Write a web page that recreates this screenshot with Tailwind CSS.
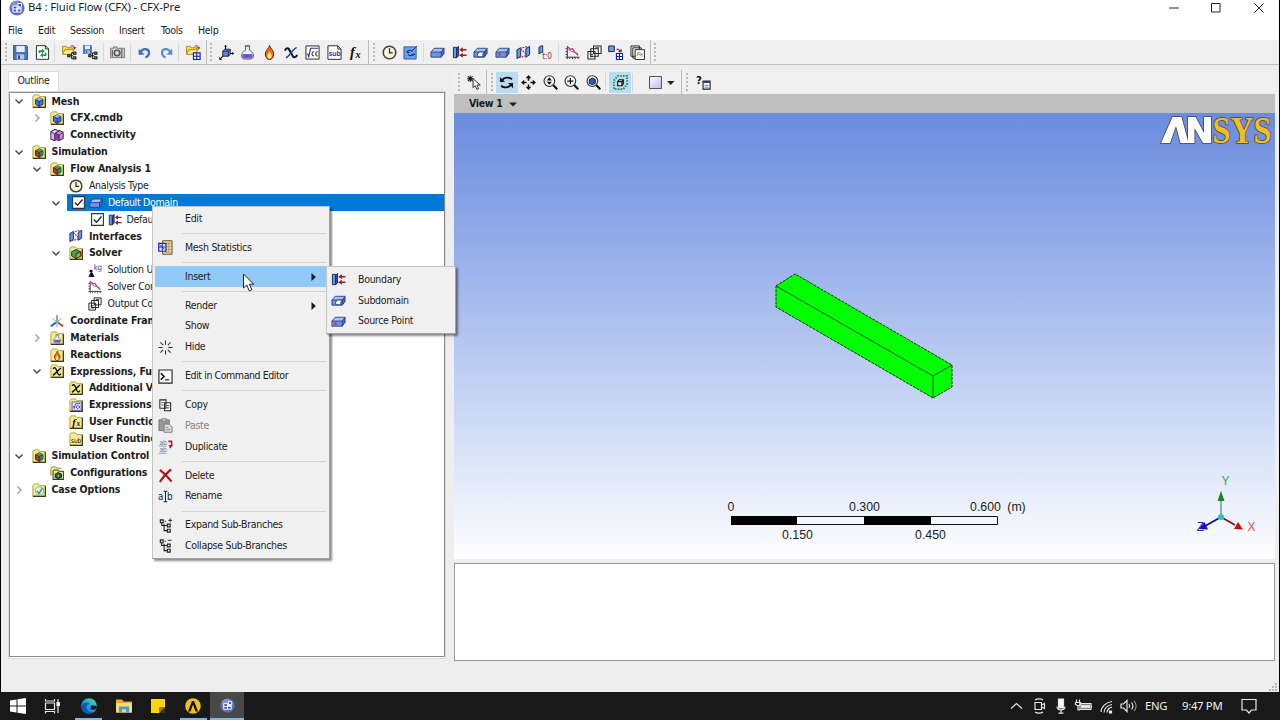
<!DOCTYPE html>
<html lang="en">
<head>
  <meta charset="UTF-8" />
  <meta name="viewport" content="width=device-width, initial-scale=1.0"/>
  <title>B4 : Fluid Flow (CFX) - CFX-Pre</title>
  <script src="https://cdn.jsdelivr.net/npm/@tailwindcss/browser@4"></script>
</head>
<body class="w-[1280px] h-[720px] overflow-hidden bg-black font-['DejaVu_Sans_Condensed','Noto_Sans',sans-serif] text-[10.5px] tracking-[-0.3px] text-[#1c1c1c]">

<!-- gradients have to stay rendered, the symbols don't -->
<svg class="absolute w-0 h-0">
  <linearGradient id="skyGrad" x1="0" y1="0" x2="1" y2="1"><stop offset="0" stop-color="#fff"/><stop offset="1" stop-color="#b4bce8"/></linearGradient>
  <linearGradient id="edgeGrad" x1="0" y1="1" x2="1" y2="0"><stop offset="0" stop-color="#0a5cc0"/><stop offset=".5" stop-color="#1fa0e0"/><stop offset="1" stop-color="#5fe07a"/></linearGradient>
</svg>

<!-- icon sprite, every symbol is 16x16 -->
<svg class="hidden">
  <symbol id="app" viewBox="0 0 16 16"><circle cx="8" cy="8" r="7.600" fill="#5a6fc0"/><circle cx="7" cy="6" r="5" fill="#8593d6"/><path d="M4 6h4v6H4zM8 8h4v4H8zM4 9h8M9 3.500h3.500V7H9z" fill="#4457ae" stroke="#fff" stroke-width="1"/></symbol>
  <symbol id="save" viewBox="0 0 16 16"><path d="M.5.5h14l1 1v14H.5z" fill="#4a74b8" stroke="#34548c"/><path d="M3.500 1h9v6.500h-9z" fill="#e8eef8"/><path d="M4 10h8v5.500H4z" fill="#b8c8e0"/><path d="M5.500 11h2v4h-2z" fill="#2c4c88"/></symbol>
  <symbol id="refresh" viewBox="0 0 16 16"><path d="M1.500.7h9.500l3.500 3.500v11.100h-13z" fill="#fff" stroke="#222"/><path d="M11 .7v3.500h3.500" fill="none" stroke="#222"/><path d="M4.700 8.500V6.500h3.500M11.300 8v3H8" fill="none" stroke="#18963a" stroke-width="1.700"/><path d="M7.500 3.800l3 2.700-3 2.500zM8.500 8.500v5l-3-2.500z" fill="#18963a"/></symbol>
  <symbol id="branches" viewBox="0 0 16 16"><path d="M7 11.500h5M10 8.500v6h2M10 8.500h2" fill="none" stroke="#111"/><path d="M6 10.200h2.500v2.500H6zM12 7.500h3v2.500h-3zM12 12.500h3V15h-3z" fill="#3aa050" stroke="#111" stroke-width=".9"/></symbol>
  <symbol id="openF" viewBox="0 0 16 16"><path d="M.6 9V1.500h4l1 1.500h6v2" fill="#f8e060" stroke="#a58518"/><path d="M.6 10L3 5h9.500L10 10z" fill="#fbe984" stroke="#a58518"/><path d="M9 1.500c2-1.500 4-.5 4.500 1.500" fill="none" stroke="#b02020"/><path d="M11.700 2.500h3.600L13.500 5z" fill="#b02020"/></symbol>
  <symbol id="openTree" viewBox="0 0 16 16"><use href="#openF"/><use href="#branches"/></symbol>
  <symbol id="saveTree" viewBox="0 0 16 16"><use href="#save" width="9.500" height="9.500"/><use href="#branches"/></symbol>
  <symbol id="openGrid" viewBox="0 0 16 16"><use href="#openF"/><path d="M8 8.500h7v7H8zM11.500 8.500v7M8 12h7" fill="#fff" stroke="#1520b0" stroke-width="1.300"/></symbol>
  <symbol id="camera" viewBox="0 0 16 16"><path d="M.6 3.500h3v-1.500h4v1.500h7.800v10H.6z" fill="#c9c9c9" stroke="#777"/><circle cx="7.500" cy="8.500" r="3.300" fill="#999" stroke="#333"/><circle cx="7.500" cy="8.500" r="1.500" fill="#eee"/><path d="M12.500 4v9.500M2.500 5.500v7" stroke="#555"/></symbol>
  <symbol id="undo" viewBox="0 0 16 16"><path d="M4 7.500C6 3 13 3.500 12.800 8.500 12.700 11 11 12.500 9 13.500" fill="none" stroke="#3c6cba" stroke-width="2.300"/><path d="M1.800 4v6.500h6.400z" fill="#3c6cba"/></symbol>
  <symbol id="redo" viewBox="0 0 16 16"><path d="M12 7.500C10 3 3 3.500 3.200 8.500 3.300 11 5 12.500 7 13.500" fill="none" stroke="#5c8cc8" stroke-width="2.300"/><path d="M14.200 4v6.500H7.800z" fill="#5c8cc8"/></symbol>
  <symbol id="box" viewBox="0 0 16 16"><path d="M1 7.500L4.500 3.500H15L12 7.500z" fill="#a5c0fa"/><path d="M1 7.500h11v5.500H1z" fill="#6a94ee"/><path d="M12 7.500l3-4V9l-3 4z" fill="#4468c0"/><path d="M1 7.500L4.500 3.500H15V9l-3 4H1zM1 7.500h11l3-4M12 7.500V13" fill="none" stroke="#22386e" stroke-width=".9"/></symbol>
  <symbol id="axesBox" viewBox="0 0 16 16"><path d="M7 0v5M11 9h5M5 11l-4 4" stroke="#111" stroke-width="1.200"/><path d="M5.500 2L7 0l1.500 2zM14 7.300L16 9l-2 1.700zM.3 12.500v3.200h3.200z" fill="#111"/><path d="M4 6.500L6 4.500h6v5.500l-2 2H4z" fill="#5f86dc" stroke="#16264f"/><path d="M4 6.500h6V12M10 6.500l2-2" fill="none" stroke="#16264f"/></symbol>
  <symbol id="flask" viewBox="0 0 16 16"><path d="M6 1h4v4.500c6 3 5 9.500 1.500 9.500h-7C1 15 0 8.500 6 5.500z" fill="#eef" stroke="#555"/><path d="M2.800 9.500h10.400c1 3-.2 5-2 5H4.800c-1.800 0-3-2-2-5z" fill="#6a5fd0"/><path d="M5 1h6M6 11.500h3" stroke="#555"/></symbol>
  <symbol id="flame" viewBox="0 0 16 16"><path d="M8 .5c.5 3 5 5 4.500 9.500C12.200 13 10.500 15.500 8 15.500S3.800 13 3.500 10C3.300 6 7.500 4 8 .5z" fill="#f06a10" stroke="#501808"/><path d="M8 6.500c.5 2 2.500 3 2.300 5.500-.2 1.500-1.200 2.500-2.300 2.500S5.700 13.500 5.700 12C5.500 9.500 7.700 8.500 8 6.500z" fill="#fff27a"/></symbol>
  <symbol id="chi" viewBox="0 0 16 16"><path d="M1 6c1-3 4-3.500 5 0l3 5c1 3 4 2.500 5-.5" fill="none" stroke="#10182a" stroke-width="2.200"/><path d="M13.500 3C10 3 5 13.500 2 13.500" fill="none" stroke="#23489a" stroke-width="1.700"/></symbol>
  <symbol id="root" viewBox="0 0 16 16"><path d="M1 1h14v14H1z" fill="#fff" stroke="#222"/><path d="M2.500 9l1.500 3.500L6 3.500h8" fill="none" stroke="#2a32a8" stroke-width="1.200"/><path d="M9.800 7.200c-3-.5-3 5 0 4.500M13.700 7.200c-3-.5-3 5 0 4.500" fill="none" stroke="#444" stroke-width="1.200"/></symbol>
  <symbol id="subDoc" viewBox="0 0 16 16"><path d="M1 .8h10.500L15 4.300v11H1z" fill="#fff" stroke="#222"/><path d="M11.500.8v3.500H15" fill="none" stroke="#222"/><text x="8" y="12.200" text-anchor="middle" font-size="7.500" font-weight="bold" letter-spacing="-.3" fill="#4a3fc8">sub</text></symbol>
  <symbol id="fx" viewBox="0 0 16 16"><text x="2" y="12.500" font-size="15.500" font-weight="bold" font-style="italic" font-family="Liberation Serif" fill="#111">f</text><text x="8" y="13.500" font-size="11" font-weight="bold" font-style="italic" font-family="Liberation Serif" fill="#111">x</text></symbol>
  <symbol id="clock" viewBox="0 0 16 16"><circle cx="8" cy="8" r="6.700" fill="#f7f7e4" stroke="#45452f" stroke-width="1.700"/><path d="M8 3.500V8.500h3.500" fill="none" stroke="#222" stroke-width="1.300"/></symbol>
  <symbol id="solve" viewBox="0 0 16 16"><path d="M1 2h13v13H1z" fill="#6f9fe8" stroke="#2c5cab"/><path d="M4 8c1-3 5-3 6-1M12 9c-1 3-5 3-7 1M4 8h3M9 10h4" fill="none" stroke="#173c82" stroke-width="1.300"/><path d="M9 7l6-6" stroke="#173c82"/></symbol>
  <symbol id="boundary" viewBox="0 0 16 16"><path d="M1.500 2.500h3.500v11h-3.500z" fill="#6a94ee" stroke="#16264f"/><path d="M5 3.500L7 1.500v10l-2 2z" fill="#3858a8" stroke="#16264f"/><path d="M9 5h6.500M9 11h6.500" stroke="#9c1c22" stroke-width="1.500"/><path d="M11.500 2.300v5.400L7.800 5zM11.500 8.300v5.400L7.800 11z" fill="#9c1c22"/></symbol>
  <symbol id="subdomain" viewBox="0 0 16 16"><use href="#box"/><path d="M5 9.500L7 7.500h5L10.500 9.500V12.500H5z" fill="#fff" stroke="#16264f" stroke-width=".8"/></symbol>
  <symbol id="source" viewBox="0 0 16 16"><use href="#box"/><path d="M3.500 9h2.500v2.500H3.500z" fill="#c83458"/></symbol>
  <symbol id="interfaces" viewBox="0 0 16 16"><path d="M1 5l4-2v9l-4 2.500zM10.500 4l4-2.500v9l-4 2.500z" fill="#6a94ee" stroke="#16264f"/><path d="M4 3.500l9-2M3 13.500l9-2.500M5 4l6 6" stroke="#a03048" stroke-dasharray="2 1" stroke-width="1.300"/></symbol>
  <symbol id="tzero" viewBox="0 0 16 16"><path d="M1 2.500L3.500.8v7L1 9.500z" fill="#6a94ee" stroke="#16264f"/><path d="M3.500.8H5v7H3" fill="#8eaaf0" stroke="#16264f"/><text x="4.500" y="15.300" font-size="9" letter-spacing="-.3" fill="#a03030">t:0</text></symbol>
  <symbol id="chart" viewBox="0 0 16 16"><path d="M2.500 1v14M.5 13h15M5 13v2M8 13v2M11 13v2M14 13v2M.5 4h2M.5 7h2M.5 10h2" stroke="#333"/><path d="M3 2l3 2.500 2-.5 2 3 4 4" fill="none" stroke="#b030a0" stroke-width="1.300"/><path d="M3 4l4 3 3 .5 4 2" fill="none" stroke="#c04848"/></symbol>
  <symbol id="copies" viewBox="0 0 16 16"><path d="M7 1h8v8H7zM4 4h8v8H4zM1 7h7.500v8H1z" fill="#fff" stroke="#222" stroke-width="1.100"/><path d="M3 10h3.500M3 12.500h3.500M9 3h4" stroke="#222"/></symbol>
  <symbol id="exchange" viewBox="0 0 16 16"><path d="M.7 1h6v6h-6z" fill="#6f96e8" stroke="#16264f"/><path d="M9 9h6.500v6.500H9zM12.200 9v6.500M9 12.200h6.500" fill="#fff" stroke="#1520a0" stroke-width="1.200"/><path d="M9 4.500h2l2 2" fill="none" stroke="#8c1c22" stroke-width="1.200"/><path d="M10.500 7.700h4V4z" fill="#8c1c22"/></symbol>
  <symbol id="stack" viewBox="0 0 16 16"><path d="M1 1h9v11H1zM3 3h9v11H3z" fill="#eee" stroke="#222"/><path d="M5.500 5h10v10.500h-10z" fill="#fff" stroke="#222"/><path d="M7 12l2-3 2 2 3-2" fill="none" stroke="#3aa050"/><path d="M7 9l3-1.500 4 5" fill="none" stroke="#c05050" stroke-width=".7"/></symbol>

  <symbol id="pick" viewBox="0 0 16 16"><path d="M1 4h7M4.500.5v7M2 1.500l5 5M7 1.500l-5 5" stroke="#111" stroke-width="1.100"/><path d="M7.500 4v9.500l2.300-2.200 1.700 4 1.900-.8-1.700-3.800h3.500z" fill="#fff" stroke="#111" stroke-width=".9"/></symbol>
  <symbol id="rotate" viewBox="0 0 16 16"><path d="M3.200 6C5 2.200 11 1.800 13.800 4.500M12.800 10C11 13.800 5 14.200 2.200 11.500" fill="none" stroke="#111" stroke-width="2"/><path d="M1 2v5.500h5.500zM15 14V8.500H9.500z" fill="#111"/></symbol>
  <symbol id="move" viewBox="0 0 16 16"><path d="M8 0l3 3.500H5zM8 16l3-3.500H5zM0 8l3.500-3v6zM16 8l-3.500-3v6z" fill="#111"/><path d="M8 3v3M8 10v3M3 8h3M10 8h3" stroke="#111" stroke-width="1.700"/></symbol>
  <symbol id="lens" viewBox="0 0 16 16"><path d="M10.500 10.500L15.200 15.200" stroke="#111" stroke-width="2.300"/><circle cx="6.800" cy="6.500" r="5.700" fill="#f6f6f6" stroke="#333" stroke-width="1.200"/></symbol>
  <symbol id="zoomDrag" viewBox="0 0 16 16"><use href="#lens"/><path d="M6.800 2.500L9.500 5.800H4zM6.800 10.500L9.500 7.300H4z" fill="#111"/></symbol>
  <symbol id="zoomIn" viewBox="0 0 16 16"><use href="#lens"/><path d="M3.500 6.500h6.600M6.800 3.200v6.600" stroke="#111" stroke-width="1.200"/></symbol>
  <symbol id="zoomFit" viewBox="0 0 16 16"><use href="#lens"/><path d="M3.500 5L6.800 3.200 10 5v3.800l-3.200 1.500-3.300-1.500z" fill="#3b55a8" stroke="#101c50"/></symbol>
  <symbol id="select3d" viewBox="0 0 16 16"><path d="M1 6l4-5h10v9l-4 5H1z" fill="none" stroke="#1f8a48" stroke-width="1.900" stroke-dasharray="1.700 1.300"/><path d="M5 7l1.500-2H11v4.500L9.500 11.500H5zM5 7h4.500v4.500M9.500 7L11 5" fill="#e8f0f0" stroke="#111" stroke-width="1.200"/></symbol>
  <symbol id="helpWin" viewBox="0 0 16 16"><text x="0" y="9.500" font-size="12" font-weight="bold" fill="#111">?</text><path d="M7.500 6.500h7.500v8.500H7.500z" fill="#fff" stroke="#222" stroke-width="1.200"/><path d="M7.500 7.500h7.500" stroke="#1c3c78" stroke-width="2"/><path d="M9 11h4.500M9 13h4.500" stroke="#777"/></symbol>

  <symbol id="folder" viewBox="0 0 16 16"><path d="M1 3L2.500 1h5L9 3h6v12H1z" fill="#f4ec8e" stroke="#a89c3c"/><path d="M15.300 3v12.300H1" fill="none" stroke="#3c3818" stroke-width="1.300"/></symbol>
  <symbol id="cubeB" viewBox="0 0 16 16"><path d="M8 1l6 3v7.500L8 15l-6-3.500V4z" fill="#4a72cc" stroke="#15224e" stroke-width="1.300"/><path d="M8 1l6 3-6 3-6-3z" fill="#9ab4f0"/><path d="M2 4l6 3 6-3M8 7v8" fill="none" stroke="#15224e" stroke-width="1.200"/></symbol>
  <symbol id="cubeRG" viewBox="0 0 16 16"><path d="M8 1l6 3v7.500L8 15l-6-3.500V4z" fill="#d02c34" stroke="#222" stroke-width="1.300"/><path d="M8 1l6 3-6 3-6-3z" fill="#2fae58"/><path d="M8 7l6-3v7.500L8 15z" fill="#1f8a50"/><path d="M2 4l6 3 6-3M8 7v8" fill="none" stroke="#222"/></symbol>
  <symbol id="fCube" viewBox="0 0 16 16"><use href="#folder"/><use href="#cubeB" x="2" y="3.500" width="12.500" height="11.500"/></symbol>
  <symbol id="fSim" viewBox="0 0 16 16"><use href="#folder"/><use href="#cubeRG" x="2" y="3.500" width="12.500" height="11.500"/></symbol>
  <symbol id="fSolver" viewBox="0 0 16 16"><use href="#folder"/><path d="M3 6.500l5-2.500 5.500 2.500v5L8 14.500l-5-3z" fill="#2fae58" stroke="#222"/><path d="M8 9l5.500-2.500v5L8 14.500z" fill="#f08a28" stroke="#222"/></symbol>
  <symbol id="fFlask" viewBox="0 0 16 16"><use href="#folder"/><use href="#flask" x="3" y="3.500" width="10.500" height="11"/></symbol>
  <symbol id="fFlame" viewBox="0 0 16 16"><use href="#folder"/><use href="#flame" x="2.500" y="3" width="11.500" height="12"/></symbol>
  <symbol id="fChi" viewBox="0 0 16 16"><use href="#folder"/><path d="M3.500 5.500c1-2 3-1.500 3.500.5l2 5c.7 2 2.500 2 3.500 0M12.500 4.500L3.500 13" fill="none" stroke="#111" stroke-width="1.600"/></symbol>
  <symbol id="fRoot" viewBox="0 0 16 16"><use href="#folder"/><path d="M3.500 4.500h11v9.500h-11z" fill="#f2f2ff" stroke="#4450b8"/><path d="M5 9l1 3 1.500-5.500H13M10 8.500c-2 0-2 3.500 0 3.500M13 8.500l-2 3.500M11 8.500l2 3.500" fill="none" stroke="#2a32a8"/></symbol>
  <symbol id="fFx" viewBox="0 0 16 16"><use href="#folder"/><use href="#fx" x="2" y="2.500" width="13" height="12.500"/></symbol>
  <symbol id="fSub" viewBox="0 0 16 16"><use href="#folder"/><text x="8" y="12.300" text-anchor="middle" font-size="7.500" letter-spacing="-.3" fill="#111">sub</text></symbol>
  <symbol id="fConf" viewBox="0 0 16 16"><path d="M1 11V2.500L2.500 1h4L8 2.500h5" fill="#f4ec8e" stroke="#8c8230"/><path d="M3.500 6L5 4.500h3.500L10 6h5.300v9.300H3.500z" fill="#f4ec8e" stroke="#3c3818" stroke-width="1.200"/><path d="M6 9l3.500-1.500L13 9v4l-3.500 1.500L6 13z" fill="#1c6a40" stroke="#111"/><path d="M9.500 10v2" stroke="#fff"/></symbol>
  <symbol id="fCase" viewBox="0 0 16 16"><use href="#folder"/><circle cx="8.500" cy="9" r="4.800" fill="#e6f6e4" stroke="#7aa"/><path d="M5.500 9l2.500 3 4-6.500" fill="none" stroke="#2c9c4c" stroke-width="1.600"/></symbol>
  <symbol id="connect" viewBox="0 0 16 16"><path d="M1 4.500L5.500 1.500l4 1.500v9l-4.500 2.500-4-2z" fill="#e4cdee" stroke="#45204f" stroke-width="1.200"/><path d="M6 6l5-3 4 2v7l-5 2.500-4-2z" fill="#c79ad6" stroke="#45204f" stroke-width="1.200"/><path d="M6 6l4.500 2v6.500l-4.500-2z" fill="#9a30bc"/><path d="M1 4.500L5 6.500v8M6 6l4.500 2L15 5M10.500 8v6" fill="none" stroke="#45204f"/></symbol>
  <symbol id="units" viewBox="0 0 16 16"><circle cx="3.500" cy="9.500" r="1.700" fill="#111"/><path d="M3.500 11L1 15.500h6L4.500 11z" fill="#111" stroke="#111"/><text x="6.500" y="7.500" font-size="9" letter-spacing="-.3" fill="#2850b0">kg</text></symbol>
  <symbol id="frame" viewBox="0 0 16 16"><path d="M8 9V1" stroke="#2fa04c" stroke-width="1.500"/><path d="M8 9l7 5" stroke="#c83040" stroke-width="2"/><path d="M8 9l-7 5" stroke="#2a46b8" stroke-width="2"/><path d="M2.500 5L8 9l5.500-4M8 9v6" fill="none" stroke="#889" stroke-width=".9"/><circle cx="8" cy="9" r="1.700" fill="#40c8d8"/></symbol>

  <symbol id="stats" viewBox="0 0 16 16"><path d="M5 .8h10v14.400H5z" fill="#ecdca0" stroke="#5c4c20"/><path d="M9 4h5M9 7h5M9 10h5M7 13h7M11.500 2v12" stroke="#a89858" stroke-width=".9"/><path d="M.8 3.500h7.700v8.500H.8z" fill="#e6e8ff" stroke="#1c28a8" stroke-width="1.300"/><path d="M1 7.500h7M4.500 4v8M2 5l5 5" stroke="#1c28a8"/></symbol>
  <symbol id="hide" viewBox="0 0 16 16"><path d="M8 .5v4.500M8 11v4.500M.5 8H5M11 8h4.500M2.500 2.500l3 3M10.500 10.500l3 3M13.500 2.500l-3 3M5.500 10.500l-3 3" stroke="#333" stroke-width="1.100"/></symbol>
  <symbol id="cmd" viewBox="0 0 16 16"><path d="M1 1h14v14H1z" fill="#fff" stroke="#222" stroke-width="1.200"/><path d="M3 4.500L6.500 8 3 11.500" fill="none" stroke="#111" stroke-width="1.700"/><path d="M7.500 11.500H12" stroke="#2a3cb0" stroke-width="1.500"/></symbol>
  <symbol id="copy" viewBox="0 0 16 16"><path d="M2 2h6.500v9H2zM7 5h6.500v8.500H7z" fill="#fff" stroke="#222" stroke-width="1.100"/><path d="M3.500 5H6M3.500 7.500H6M9 8h3M9 10.500h3" stroke="#444"/></symbol>
  <symbol id="paste" viewBox="0 0 16 16"><path d="M1 2h11v11.500H1z" fill="#999" stroke="#777"/><path d="M4 .8h5v2.700H4z" fill="#ccc" stroke="#777"/><path d="M6.500 6.500H12l3 3v5.700H6.500z" fill="#ddd" stroke="#777"/><path d="M8 10h3M8 12.500h5" stroke="#888"/></symbol>
  <symbol id="dup" viewBox="0 0 16 16"><text x="1.500" y="6.500" font-size="7.500" fill="#777">ab</text><text x="1.500" y="14" font-size="7.500" fill="#777">ab</text><path d="M1 7.500h8M1 15.300h8" stroke="#999"/><path d="M11 2.500h3.500V7" fill="none" stroke="#b01c28" stroke-width="1.700"/><path d="M11.300 6.500H16L13 10.500z" fill="#b01c28"/></symbol>
  <symbol id="del" viewBox="0 0 16 16"><path d="M2 2c4 3 9 8 12.500 12.500M14 1.500C10 5 5 10 2 15" fill="none" stroke="#ac1218" stroke-width="2.300"/></symbol>
  <symbol id="rename" viewBox="0 0 16 16"><text x="0" y="11.500" font-size="10.500" fill="#222">a</text><text x="9.500" y="11.500" font-size="10.500" fill="#222">b</text><path d="M6 2.500h4M6 13.500h4M8 2.500v11" stroke="#222" stroke-width="1.100"/></symbol>
  <symbol id="tree" viewBox="0 0 16 16"><path d="M2.500 2h3v3h-3zM10 6.500h3v3h-3zM10 12h3v3h-3zM7 3.500h1.500M4 5v3h2.500M6.500 6v7.500H10M6.500 8H10" fill="none" stroke="#222" stroke-width="1.200"/></symbol>
  <symbol id="expand" viewBox="0 0 16 16"><use href="#tree"/><path d="M11 2.500h4M13 .5v4" stroke="#222"/></symbol>
  <symbol id="collapse" viewBox="0 0 16 16"><use href="#tree"/><path d="M10.500 2.500h4" stroke="#222"/></symbol>
</svg>

<div class="flex flex-col w-[1278px] h-[692px] ml-px bg-[#eeeeee]">
  <!-- title bar -->
  <header class="flex items-center h-5 pb-[5px] bg-white pl-2 shrink-0">
    <svg class="w-4 h-4"><use href="#app"/></svg>
    <h1 class="ml-[3px] font-['Noto_Sans',sans-serif] text-[11.3px] tracking-[-0.1px] whitespace-nowrap">B4 : Fluid Flow (CFX) - CFX-Pre</h1>
    <svg class="ml-auto mr-[13px] w-[98px] h-[11px]" fill="none" stroke="#222"><path d="M1 6h10M43.500 1.500h8.500v8.500h-8.500zM86.500 1.500l9 9M95.500 1.500l-9 9"/></svg>
  </header>
  <nav class="flex items-center h-[20px] pt-[2px] bg-white pl-[7px] shrink-0">
    <span class="w-[30px]">File</span><span class="w-8">Edit</span><span class="w-[49px]">Session</span><span class="w-[42px]">Insert</span><span class="w-[37px]">Tools</span><span>Help</span>
  </nav>
  <div id="mainBar" class="flex items-center h-[25px] bg-[#f0f0f0] border-b border-[#bdbdbd] shrink-0"></div>

  <main class="flex grow min-h-0">
    <!-- outline -->
    <section class="w-[444px] pl-[7px] pt-[6px] shrink-0">
      <div class="w-[51px] h-[20px] pb-px bg-white border border-b-0 border-[#dcdcdc] flex items-center justify-center">Outline</div>
      <div class="w-[438px] h-[568px] border border-[#d8d8d8] bg-white">
        <div id="outline" class="w-[436px] h-[565px] bg-white border border-[#8c8c8c] overflow-hidden"></div>
      </div>
    </section>

    <section class="flex flex-col grow pl-[9px] pr-[4px] pt-[5px]">
      <div id="viewBar" class="flex items-center h-[24px] bg-[#f0f0f0] shrink-0"></div>
      <div class="flex items-center h-[19px] bg-[#bfbfbf] pl-[15px] pt-px font-bold shrink-0">View 1
        <svg class="ml-[6px] w-[8px] h-[5px]"><path d="M0 .5h8L4 4.500z" fill="#222"/></svg>
      </div>
      <div class="h-[446px] bg-linear-to-b from-[#6b8bdd] to-[#fefefe] shrink-0">
        <svg class="w-[821px] h-[446px] overflow-visible" viewBox="454 113 821 446" font-family="Liberation Sans">
          <path d="M776 286l19-12 157 91v22l-19 11-157-91z" fill="#0f0" stroke="#063806" stroke-dasharray="3 1"/>
          <path d="M776 286l157 90v22M933 376l19-11" fill="none" stroke="#04500c" stroke-width="1"/>
          <g stroke="#444" paint-order="stroke" stroke-width="1.500">
            <path d="M1161 143l11.500-26h9l6.500 24V117h7.500l8.500 16v-16h7v26h-8l-8.500-15v15h-14l-4.500-17-6 17z" fill="#fff"/>
            <text x="1212.500" y="143" font-family="Liberation Serif" font-weight="bold" font-size="37" letter-spacing="0" textLength="59" lengthAdjust="spacingAndGlyphs" fill="#f4be1c">SYS</text>
          </g>
          <path d="M731.500 516.500h266v8h-266z" fill="#f6f7fe" stroke="#111"/>
          <path d="M731 516h66v9h-66zM864 516h67v9h-67z" fill="#000"/>
          <g font-size="12.300" letter-spacing="0" fill="#1c1c24" text-anchor="middle">
            <text x="731" y="511">0</text><text x="864.500" y="511">0.300</text><text x="985.500" y="511">0.600</text><text x="1016.500" y="511">(m)</text>
            <text x="797.500" y="539">0.150</text><text x="930.500" y="539">0.450</text>
          </g>
          <g stroke-width="1.700">
            <path d="M1221 516v-18" stroke="#4a8a5c" stroke-width="1.200"/><path d="M1217.500 501l3.500-10 3.500 10z" fill="#0e8c1c"/>
            <path d="M1221 517l14 8" stroke="#8c0c10"/><path d="M1234 529l9 .5-5-7.500z" fill="#c80c10"/>
            <path d="M1221 517l-15 8.500" stroke="#0c0c8c"/><path d="M1208 529.500l-9-.5 5.500-7z" fill="#1010c8"/>
            <circle cx="1221" cy="517" r="3" fill="#1cc8d0"/>
          </g>
          <g font-size="12" letter-spacing="0" text-anchor="middle"><text x="1225.500" y="484.500" fill="#3aa850">Y</text><text x="1251.500" y="530.500" fill="#e05058">X</text><text x="1200.500" y="530.500" fill="#2424c0">Z</text></g>
        </svg>
      </div>
      <div class="mt-[4px] h-[98px] bg-white border border-[#9a9a9a] shrink-0"></div>
      <svg class="mt-auto ml-auto -mr-[3px] w-[9px] h-[9px] shrink-0" fill="#b8b8b8"><path d="M6 0h2v2H6zM3 3h2v2H3zM6 3h2v2H6zM0 6h2v2H0zM3 6h2v2H3zM6 6h2v2H6z"/></svg>
    </section>
  </main>
</div>

<!-- taskbar -->
<footer class="flex h-[28px] bg-[#191919] text-[#f0f0f0] font-['Noto_Sans',sans-serif]">
  <div class="flex items-center justify-center w-9"><svg class="w-4 h-4" fill="#fff"><path d="M0 2.500l6.500-1v6H0zM7.500 1.300L16 0v7.500H7.500zM0 8.500h6.500v6L0 13.500zM7.500 8.500H16V16l-8.500-1.300z"/></svg></div>
  <div class="flex items-center justify-center w-[33px] pr-[2px]"><svg class="w-4 h-4" fill="none" stroke="#e8e8e8" stroke-width="1.200"><path d="M1.500 5h9v6.500h-9zM1.500 1v2h9V1M1.500 15.500v-2h9v2M14 1v14"/><path d="M13 4.500h2.500v3H13z" fill="#fff"/></svg></div>
  <div class="flex items-center justify-center w-[39px]"><div class="flex items-center justify-center w-[27px] h-full border-b-2 border-[#76b9ed] pt-px">
    <svg class="w-4 h-4"><circle cx="8" cy="8" r="7.800" fill="url(#edgeGrad)"/><path d="M.3 9C1 4.500 6.500 3.500 9 6 7 5.500 5.300 7 5.300 9.300c0 3 3 5.300 6.700 4.700C8 17 1 15.500.3 9z" fill="#0d57b0"/><path d="M9.300 10.800c.9-.7 1-2 .4-3.300 1.500 0 5-.5 6.300 1-.3 2-2 3.500-3.500 3.300-1.500-.1-2.500-.4-3.200-1z" fill="#191919"/></svg></div></div>
  <div class="flex items-center justify-center w-[31px]"><svg class="w-4 h-4"><path d="M0 1.500h6l1.500 2H16v11H0z" fill="#e8a82c"/><path d="M0 5h16v9.500H0z" fill="#fbd975"/><path d="M3 14.500V8.500h10v6h-3V11.500H6v3z" fill="#4c9cd4"/></svg></div>
  <div class="flex items-center justify-center w-[37px]"><svg class="w-[14px] h-[14px]"><path d="M0 0h14v8.500H8.500V14H0z" fill="#fcd40c"/><path d="M8.500 14V8.500H14z" fill="#9c7a08"/><path d="M8.500 14L14 8.500V14z" fill="#3c3010"/></svg></div>
  <div class="flex items-center justify-center w-[34px]"><div class="flex items-center justify-center w-[27px] h-full border-b-2 border-[#76b9ed] pt-px">
    <svg class="w-4 h-4"><circle cx="8" cy="8" r="7.800" fill="#f0c020"/><path d="M3 13.500L7 3h2l4 10.500h-2.500L8 6.500l-2.500 7z" fill="#111"/></svg></div></div>
  <div class="flex items-center justify-center w-[34px] h-full bg-[#484848] border-b-2 border-[#76b9ed] pt-px"><svg class="w-[15px] h-[15px]"><use href="#app"/></svg></div>
  <div class="flex items-center ml-auto text-[11.3px] tracking-[-0.3px]">
    <svg class="w-[160px] h-4 mr-[-1px]" fill="none" stroke="#e4e4e4" stroke-width="1.200">
      <path d="M25 10.500l5.500-5 5.500 5"/>
      <path d="M49 4.500h6.500v7H49zM55.500 7l3-1.500v5l-3-1.500M49 2c2-1.500 6-1.500 8 0M49 14c2 1.500 6 1.500 8 0"/>
      <path d="M72.500 1h5v9h-5z" fill="#fff"/><path d="M71 8.500c0 4.500 8 4.500 8 0M75 12v3M72.500 15.200h5"/>
      <path d="M94 5.500h11v6H94z"/><path d="M95.500 7h8v3h-8z" fill="#e4e4e4"/><path d="M105.500 7.500v2M90.500 1.500v3M93.500 1.500v3M89.500 4.500h5v2l-2.500 1.500-2.500-1.500zM92 8v4h2"/>
      <path d="M115 14C115 9 120 4 126 3.500M118 14.500c0-4 4-7.500 8-8M121 14.500c0-2.500 2.500-5 5-5.300"/><path d="M123.500 13h2v2h-2z" fill="#fff"/>
      <path d="M135 6h2.500l3.500-3.500v11l-3.500-3.500H135zM143 6c1 1.500 1 2.500 0 4M145.500 4.500c2 2.500 2 4.500 0 7"/><path d="M148 3c3 3.500 3 6.500 0 10" stroke="#888"/>
    </svg>
    <span class="w-[37px]">ENG</span>
    <span class="w-[59px] whitespace-nowrap">9:47 PM</span>
    <svg class="w-4 h-4 mr-[23px]" fill="none" stroke="#e8e8e8" stroke-width="1.200"><path d="M1 1.500h14v10.500h-4.500L8 15l-2.500-3H1z"/></svg>
  </div>
</footer>

<!-- context menu and its submenu float over the window -->
<div id="contextMenu" class="absolute left-[152px] top-[206px] w-[178px] h-[353px] bg-[#f0f0f0] border border-[#c4c4c4] border-r-[#a0a0a0] border-b-[#a0a0a0] shadow-[2px_2px_2px_rgba(0,0,0,0.45)] pl-[2px] pr-[3px] pt-[1.2px]"></div>
<div id="subMenu" class="absolute left-[326px] top-[266px] w-[130px] h-[68px] bg-[#f0f0f0] border border-[#c4c4c4] border-r-[#a0a0a0] border-b-[#a0a0a0] shadow-[2px_2px_2px_rgba(0,0,0,0.45)] pl-[1px] pr-[3px] pt-[2.5px]"></div>
<svg class="absolute left-[242px] top-[273px] w-[13px] h-[20px]"><path d="M1.500 1v14l3.300-3 2.400 5.800 2.600-1.100-2.400-5.500h4.300z" fill="#fff" stroke="#222"/></svg>

<script>
  const icon = (name, cls) => `<svg class="${cls}"><use href="#${name}"/></svg>`;

  // "|" separator, "#" end of a toolbar plus the grip of the next one
  function toolbar(id, items, tail) {
    const grip = '<span class="w-[9px] h-[18px] flex justify-center shrink-0"><span class="w-[2px] h-full border-l-2 border-dotted border-[#b8b8b8]"></span></span>';
    const parts = items.map(it => {
      if (it === '|') return '<span class="w-[5.3px] h-[19px] border-r border-[#d8d8d8] -translate-x-[3px] shrink-0"></span>';
      if (it === '#') return '<span class="w-[2.6px] h-full border-r border-[#bcbcbc] shrink-0"></span>' + grip;
      const on = it.startsWith('*');
      const name = it.replace('*', '');
      const box = on ? 'flex items-center justify-center w-[21.6px] h-[21px] bg-[#b9dcf2] shrink-0' : 'flex items-center justify-center w-[21.6px] h-[21px] shrink-0';
      return `<span class="${box}">${icon(name, 'w-[15px] h-[15px]')}</span>`;
    });
    document.getElementById(id).innerHTML = grip + parts.join('') + (tail || '');
  }

  toolbar('mainBar', ['save', 'refresh', '|', 'openTree', 'saveTree', '|', 'camera', '|', 'undo', 'redo', '|', 'openGrid', '#',
    'axesBox', 'flask', 'flame', 'chi', 'root', 'subDoc', 'fx', '#', 'clock', 'solve', '|',
    'box', 'boundary', 'subdomain', 'source', 'interfaces', 'tzero', '|', 'chart', 'copies', 'exchange', 'stack', '#']);

  toolbar('viewBar', ['pick', '#', '*rotate', 'move', 'zoomDrag', 'zoomIn', 'zoomFit', '|', '*select3d', '|'], `
    <svg class="w-[26px] h-[13px] ml-[13px]"><path d="M.5.5h12v12H.5z" fill="url(#skyGrad)" stroke="#555"/><path d="M18 5h7.500L21.700 9z" fill="#222"/></svg>
    <span class="w-[7px] h-full border-r border-[#bcbcbc]"></span>
    <span class="w-[9px] h-[18px] flex justify-center"><span class="w-[2px] h-full border-l-2 border-dotted border-[#b8b8b8]"></span></span>
    <span class="flex items-center justify-center w-[24px]">${icon('helpWin', 'w-[15px] h-[15px]')}</span>`);

  // level, chevron (v open, > closed), icon, label, bold, checkbox
  const outline = [
    [0, 'v', 'fCube', 'Mesh', 1],
    [1, '>', 'fCube', 'CFX.cmdb', 1],
    [1, '', 'connect', 'Connectivity', 1],
    [0, 'v', 'fSim', 'Simulation', 1],
    [1, 'v', 'fSim', 'Flow Analysis 1', 1],
    [2, '', 'clock', 'Analysis Type', 0],
    [2, 'v', 'box', 'Default Domain', 0, 1],
    [3, '', 'boundary', 'Default', 0, 1],
    [2, '', 'interfaces', 'Interfaces', 1],
    [2, 'v', 'fSolver', 'Solver', 1],
    [3, '', 'units', 'Solution Units', 0],
    [3, '', 'chart', 'Solver Control', 0],
    [3, '', 'copies', 'Output Control', 0],
    [1, '', 'frame', 'Coordinate Frames', 1],
    [1, '>', 'fFlask', 'Materials', 1],
    [1, '', 'fFlame', 'Reactions', 1],
    [1, 'v', 'fChi', 'Expressions, Functions', 1],
    [2, '', 'fChi', 'Additional Variables', 1],
    [2, '', 'fRoot', 'Expressions', 1],
    [2, '', 'fFx', 'User Functions', 1],
    [2, '', 'fSub', 'User Routines', 1],
    [0, 'v', 'fSim', 'Simulation Control', 1],
    [1, '', 'fConf', 'Configurations', 1],
    [0, '>', 'fCase', 'Case Options', 1],
  ];

  const chevrons = {
    'v': '<path d="M1.500 3.500L5 7l3.500-3.500" fill="none" stroke="#444" stroke-width="1.400"/>',
    '>': '<path d="M3.500 1.500L7 5 3.500 8.500" fill="none" stroke="#999" stroke-width="1.300"/>',
    '': '',
  };

  document.getElementById('outline').innerHTML = outline.map(([level, chev, ic, label, bold, check]) => {
    const selected = label === 'Default Domain';
    const checkbox = check ? '<svg class="w-[13px] h-[13px] ml-[5px] mr-[4px] shrink-0"><path d="M.6.6h11.800v11.800H.6z" fill="#fff" stroke="#333" stroke-width="1.100"/><path d="M2.800 6.500l2.700 2.700 5-5.700" fill="none" stroke="#222" stroke-width="1.300"/></svg>' : '';
    const text = bold ? 'ml-[6px] font-bold tracking-[-0.1px] whitespace-nowrap' : check ? 'ml-[5px] whitespace-nowrap' : 'ml-[6px] whitespace-nowrap';
    return `
      <div class="flex items-center h-[16.89px]" style="padding-left:${3.5 + level * 18.7}px">
        <svg class="${check ? 'w-[10px] h-[10px] mr-[6px] shrink-0' : 'w-[10px] h-[10px] mr-[8px] shrink-0'}">${chevrons[chev]}</svg>
        <div class="${selected ? 'flex items-center grow h-full bg-[#0078d7] text-white' : 'flex items-center grow h-full'}">
          ${checkbox}${icon(ic, 'w-[14px] h-[14px] shrink-0')}
          <span class="${text}">${label}</span>
        </div>
      </div>`;
  }).join('');

  // icon, label, extra: "-" is a separator
  function menu(id, items) {
    document.getElementById(id).innerHTML = items.map(it => {
      if (it === '-') return '<div class="h-[8.35px] ml-[27px] pt-[4px]"><div class="h-px bg-[#d4d4d4]"></div></div>';
      const [ic, label, extra] = it;
      const row = extra === 'hover' ? 'flex items-center h-[20.7px] bg-[#91c9f7]' : extra === 'off' ? 'flex items-center h-[20.7px] text-[#868686]' : 'flex items-center h-[20.7px]';
      const arrow = label === 'Insert' || label === 'Render' ? '<svg class="ml-auto mr-[10px] w-[5px] h-[8px]"><path d="M.5 0v8L4.800 4z" fill="#111"/></svg>' : '';
      const text = ic === 'cmd' ? 'whitespace-nowrap tracking-[-0.42px]' : 'whitespace-nowrap';
      return `<div class="${row}"><span class="w-[30px] pl-[3px] shrink-0">${ic ? icon(ic, 'w-[15px] h-[15px]') : ''}</span><span class="${text}">${label}</span>${arrow}</div>`;
    }).join('');
  }

  menu('contextMenu', [
    ['', 'Edit'], '-',
    ['stats', 'Mesh Statistics'], '-',
    ['', 'Insert', 'hover'], '-',
    ['', 'Render'], ['', 'Show'], ['hide', 'Hide'], '-',
    ['cmd', 'Edit in Command Editor'], '-',
    ['copy', 'Copy'], ['paste', 'Paste', 'off'], ['dup', 'Duplicate'], '-',
    ['del', 'Delete'], ['rename', 'Rename'], '-',
    ['expand', 'Expand Sub-Branches'], ['collapse', 'Collapse Sub-Branches'],
  ]);
  menu('subMenu', [['boundary', 'Boundary'], ['subdomain', 'Subdomain'], ['source', 'Source Point']]);
</script>
</body>
</html>
